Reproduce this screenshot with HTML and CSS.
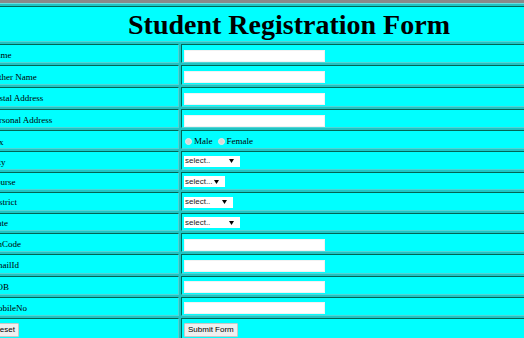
FILE: index.html
```html
<!DOCTYPE html>
<html>
<head>
<meta charset="utf-8">
<title>Student Registration Form</title>
<link rel="stylesheet" href="styles.css">
</head>
<body>
<div class="topbar"></div>
<div class="viewport">
<form class="form">
<table class="reg">
<colgroup><col class="c1"><col class="c2"></colgroup>
<tr><th colspan="2" class="title">Student Registration Form</th></tr>
<tr class="ti"><td class="lbl">Name</td><td class="fld"><input type="text" class="txt"></td></tr>
<tr class="ti"><td class="lbl">Father Name</td><td class="fld"><input type="text" class="txt"></td></tr>
<tr class="ti"><td class="lbl">Postal Address</td><td class="fld"><input type="text" class="txt"></td></tr>
<tr class="ti"><td class="lbl">Personal Address</td><td class="fld"><input type="text" class="txt"></td></tr>
<tr class="rd"><td class="lbl">Sex</td><td class="fld"><label class="opt"><span class="radio"></span>Male</label><label class="opt"><span class="radio"></span>Female</label></td></tr>
<tr class="se"><td class="lbl">City</td><td class="fld"><span class="sel w56"><span class="stext">select..</span><svg class="arr" width="5" height="4" viewBox="0 0 5 4"><path d="M0 0H5L2.5 4Z" fill="#000"/></svg></span></td></tr>
<tr class="se"><td class="lbl">Course</td><td class="fld"><span class="sel w41"><span class="stext">select...</span><svg class="arr" width="5" height="4" viewBox="0 0 5 4"><path d="M0 0H5L2.5 4Z" fill="#000"/></svg></span></td></tr>
<tr class="se"><td class="lbl">District</td><td class="fld"><span class="sel w49"><span class="stext">select..</span><svg class="arr" width="5" height="4" viewBox="0 0 5 4"><path d="M0 0H5L2.5 4Z" fill="#000"/></svg></span></td></tr>
<tr class="se"><td class="lbl">State</td><td class="fld"><span class="sel w56"><span class="stext">select..</span><svg class="arr" width="5" height="4" viewBox="0 0 5 4"><path d="M0 0H5L2.5 4Z" fill="#000"/></svg></span></td></tr>
<tr class="ti lo"><td class="lbl">PinCode</td><td class="fld"><input type="text" class="txt"></td></tr>
<tr class="ti lo"><td class="lbl">EmailId</td><td class="fld"><input type="text" class="txt"></td></tr>
<tr class="ti lo"><td class="lbl">DOB</td><td class="fld"><input type="text" class="txt"></td></tr>
<tr class="ti lo"><td class="lbl">MobileNo</td><td class="fld"><input type="text" class="txt"></td></tr>
<tr class="bt"><td class="lbl"><button type="reset" class="btn">Reset</button></td><td class="fld"><button type="submit" class="btn">Submit Form</button></td></tr>
</table>
</form>
</div>
</body>
</html>
```
FILE: styles.css
```css
html, body {
  margin: 0;
  padding: 0;
  background: #00ffff;
  overflow: hidden;
}
.topbar {
  height: 3px;
  background: #8a8a8a;
}
.viewport {
  width: 524px;
  overflow: hidden;
}
.form {
  margin: 0;
}
.reg {
  margin-left: -15px;
  width: 608px;
  table-layout: fixed;
  border-collapse: separate;
  border-spacing: 2px;
  background: #1fc4c4;
  border: 1px solid;
  border-color: #66e0e0 #066 #066 #66e0e0;
  font-family: "Liberation Serif", "Times New Roman", serif;
  color: #000;
}
col.c1 { width: 191px; }
.reg td, .reg th {
  background: #00ffff;
  border: 1px solid;
  border-color: #065 #4fd6d6 #4fd6d6 #065;
  padding: 0 1px;
  vertical-align: bottom;
}
.reg .fld {
  padding-left: 2px;
  font-size: 9px;
  line-height: 10.4px;
}
.title {
  font-size: 28px;
  font-weight: bold;
  text-align: center;
  height: 33.5px;
  line-height: 32px;
  vertical-align: middle;
}
.lbl {
  font-size: 9px;
  line-height: 10.4px;
  text-align: left;
}
.ti .lbl { height: 15.9px; padding-bottom: 1.8px; }
.ti .fld { height: 17px; padding-bottom: 0.7px; }
.ti.lo .lbl { height: 15.4px; padding-bottom: 1.8px; }
.ti.lo .fld { height: 16.5px; padding-bottom: 0.7px; }
.rd .lbl, .rd .fld { height: 15.7px; padding-bottom: 1.3px; }
.se .lbl { height: 14.7px; padding-bottom: 1.8px; }
.se .fld { height: 14.7px; padding-bottom: 1.8px; }
.bt td { height: 15px; vertical-align: top; padding-top: 4px; }
.txt {
  display: block;
  box-sizing: border-box;
  width: 141px;
  height: 12px;
  margin: 0;
  padding: 0;
  border: 1px solid #f2f2f2;
  background: #fff;
  outline: none;
}
.opt {
  display: inline-flex;
  align-items: center;
  font-size: 9px;
  line-height: 10.4px;
  margin-right: 4px;
}
.radio {
  display: inline-block;
  width: 7px;
  height: 7px;
  border-radius: 50%;
  background: #d8d8d8;
  border: 1px solid #e8e8e8;
  box-sizing: border-box;
  margin: 0 2px 0 1px;
}
.sel {
  position: relative;
  display: flex;
  align-items: center;
  box-sizing: border-box;
  height: 11px;
  background: #fff;
  font-family: "Liberation Sans", Arial, sans-serif;
  font-size: 8px;
  color: #222;
  padding-left: 1px;
}
.w56 { width: 56px; }
.w41 { width: 41px; }
.w49 { width: 49px; }
.stext { flex: 1; }
.arr {
  margin-right: 6px;
  flex: none;
}
.btn {
  display: block;
  box-sizing: border-box;
  height: 14px;
  margin: 0;
  padding: 0 3px;
  font-family: "Liberation Sans", Arial, sans-serif;
  font-size: 8px;
  line-height: 12px;
  color: #000;
  background: #efefef;
  border: 1px solid #c8c8c8;
  border-radius: 1px;
}
```
